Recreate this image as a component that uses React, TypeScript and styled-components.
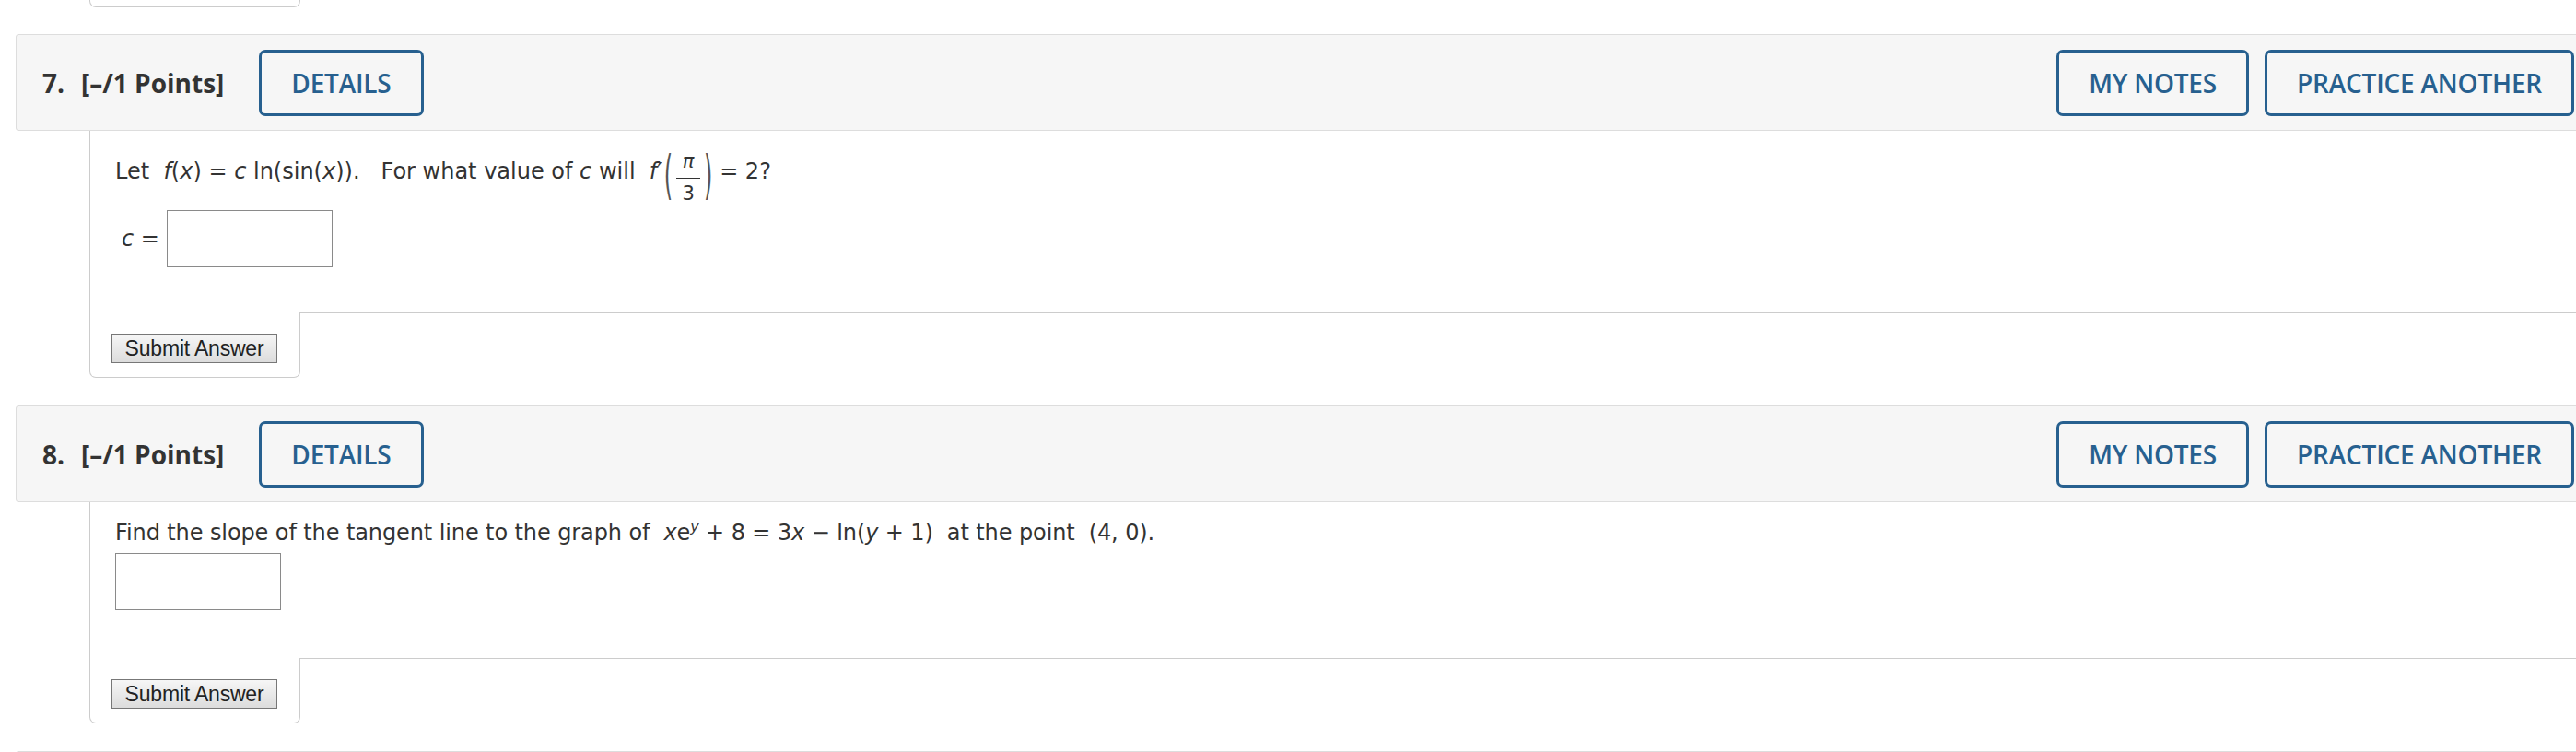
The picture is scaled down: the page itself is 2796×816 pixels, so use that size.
import React from 'react';
import styled, { createGlobalStyle } from 'styled-components';

const colors = {
  blue: '#27608f',
  text: '#333333',
  headerBg: '#f6f6f6',
  headerBorder: '#dddddd',
  rule: '#cccccc',
  field: '#8a8a8a',
};

const GlobalStyle = createGlobalStyle`
  html, body {
    margin: 0;
    padding: 0;
    overflow: hidden;
    background: #ffffff;
  }
  body {
    font-family: "DejaVu Sans", Verdana, sans-serif;
    color: ${colors.text};
  }
`;

const Page = styled.div`
  padding-left: 17px;
`;

/* bottom of the previous question's submit box, cut off by the top edge */
const PrevTail = styled.div`
  margin-left: 80px;
  width: 229px;
  height: 8px;
  box-sizing: border-box;
  border: 1px solid ${colors.rule};
  border-top: none;
  border-radius: 0 0 7px 7px;
  margin-bottom: 29px;
`;

const Question = styled.section`
  margin-bottom: 30px;
`;

const Header = styled.div`
  display: flex;
  align-items: center;
  height: 105px;
  box-sizing: border-box;
  margin-right: -16px;
  padding: 0 17px 0 28px;
  background: ${colors.headerBg};
  border: 1px solid ${colors.headerBorder};
  border-radius: 3px;
  font-family: "Open Sans", "DejaVu Sans", sans-serif;
  color: ${colors.text};
`;

const Num = styled.span`
  font-size: 28px;
  font-weight: 700;
  margin-right: 18px;
`;

const Points = styled.span`
  font-size: 28px;
  font-weight: 700;
  margin-right: 38px;
`;

const HeaderActions = styled.div`
  display: flex;
  gap: 17px;
  margin-left: auto;
`;

const OutlineButton = styled.button`
  display: inline-flex;
  align-items: center;
  height: 72px;
  box-sizing: border-box;
  padding: 0 32px;
  background: transparent;
  border: 3px solid ${colors.blue};
  border-radius: 7px;
  color: ${colors.blue};
  font-family: "Open Sans", "DejaVu Sans", sans-serif;
  font-size: 28px;
  font-weight: 600;
  letter-spacing: -0.2px;
  cursor: pointer;
`;

const Body = styled.div`
  margin-left: 80px;
`;

const Content = styled.div<{ $tail: number }>`
  border-left: 1px solid ${colors.rule};
  padding: 15px 0 ${(p) => p.$tail}px 27px;
  font-size: 24px;
  line-height: 36px;
`;

const Prompt = styled.div<{ $spacing?: number }>`
  white-space: nowrap;
  letter-spacing: ${(p) => p.$spacing ?? 0}px;
`;

const Var = styled.i`
  font-style: italic;
`;

const Sup = styled.sup`
  font-size: 16px;
  line-height: 0;
  vertical-align: 9px;
`;

/* f'(π/3): stretched parentheses around a stacked fraction */
const Frac = styled.span`
  display: inline-flex;
  align-items: center;
  vertical-align: -4px;
  height: 65px;
  margin-left: 2px;
`;

const Paren = styled.span`
  display: block;
  font-size: 24px;
  line-height: 24px;
  color: #555;
  transform: scaleY(2.4);
`;

const FracCol = styled.span`
  display: flex;
  flex-direction: column;
  align-items: center;
  box-sizing: border-box;
  height: 65px;
  padding-top: 6px;
  margin: 0 4px;
  font-size: 21px;
  line-height: 24px;
`;

const FracBar = styled.span`
  display: block;
  width: 26px;
  height: 1px;
  background: ${colors.text};
  margin: 6px 0 4px;
`;

const AnswerRow = styled.div`
  display: flex;
  align-items: center;
  gap: 8px;
  margin-top: 6px;
  padding-left: 7px;
`;

const AnswerInput = styled.input<{ $top?: number }>`
  display: block;
  width: 180px;
  height: 62px;
  box-sizing: border-box;
  margin: ${(p) => p.$top ?? 0}px 0 0 0;
  border: 1px solid ${colors.field};
  border-radius: 0;
  background: #fff;
  font-size: 22px;
`;

const Footer = styled.div`
  display: flex;
`;

const SubmitBox = styled.div`
  width: 229px;
  box-sizing: border-box;
  padding: 23px 0 15px 23px;
  border: 1px solid ${colors.rule};
  border-top: none;
  border-radius: 0 0 7px 7px;
`;

const FooterRule = styled.div`
  flex: 1;
  border-top: 1px solid ${colors.rule};
`;

const SubmitButton = styled.button`
  display: block;
  width: 180px;
  height: 32px;
  box-sizing: border-box;
  padding: 0;
  border: 1px solid #777;
  border-radius: 0;
  background: linear-gradient(#f6f6f6, #dcdcdc);
  color: #222;
  font-family: "Liberation Sans", Arial, sans-serif;
  font-size: 23px;
  line-height: 30px;
  letter-spacing: -0.2px;
`;

const QuestionHeader = ({ number }: { number?: number }) => (
  <Header>
    {number !== undefined && (
      <>
        <Num>{number}.</Num>
        <Points>[–/1 Points]</Points>
        <OutlineButton>DETAILS</OutlineButton>
        <HeaderActions>
          <OutlineButton>MY NOTES</OutlineButton>
          <OutlineButton>PRACTICE ANOTHER</OutlineButton>
        </HeaderActions>
      </>
    )}
  </Header>
);

type QuestionProps = { number: number; tail: number; children: React.ReactNode };

const QuestionBlock = ({ number, tail, children }: QuestionProps) => (
  <Question>
    <QuestionHeader number={number} />
    <Body>
      <Content $tail={tail}>{children}</Content>
      <Footer>
        <SubmitBox>
          <SubmitButton>Submit Answer</SubmitButton>
        </SubmitBox>
        <FooterRule />
      </Footer>
    </Body>
  </Question>
);

const App = () => {
  return (
    <Page>
      <GlobalStyle />
      <PrevTail />

      <QuestionBlock number={7} tail={49}>
        <Prompt>
          Let&nbsp;&nbsp;<Var>f</Var>(<Var>x</Var>) = <Var>c</Var> ln(sin(<Var>x</Var>)).&nbsp;&nbsp;
          For what value of <Var>c</Var> will&nbsp;&nbsp;<Var>f</Var>′
          <Frac>
            <Paren>(</Paren>
            <FracCol>
              <Var>π</Var>
              <FracBar />
              <span>3</span>
            </FracCol>
            <Paren>)</Paren>
          </Frac>
          {' '}= 2?
        </Prompt>
        <AnswerRow>
          <span>
            <Var>c</Var> =
          </span>
          <AnswerInput type="text" />
        </AnswerRow>
      </QuestionBlock>

      <QuestionBlock number={8} tail={52}>
        <Prompt $spacing={-0.1}>
          Find the slope of the tangent line to the graph of&nbsp;&nbsp;<Var>x</Var>e
          <Sup>
            <Var>y</Var>
          </Sup>{' '}
          + 8 = 3<Var>x</Var> − ln(<Var>y</Var> + 1)&nbsp;&nbsp;at the point&nbsp;&nbsp;(4, 0).
        </Prompt>
        <AnswerInput type="text" $top={4} />
      </QuestionBlock>

      {/* top edge of the next question's header, below the fold */}
      <Question>
        <QuestionHeader />
      </Question>
    </Page>
  );
};

export default App;
